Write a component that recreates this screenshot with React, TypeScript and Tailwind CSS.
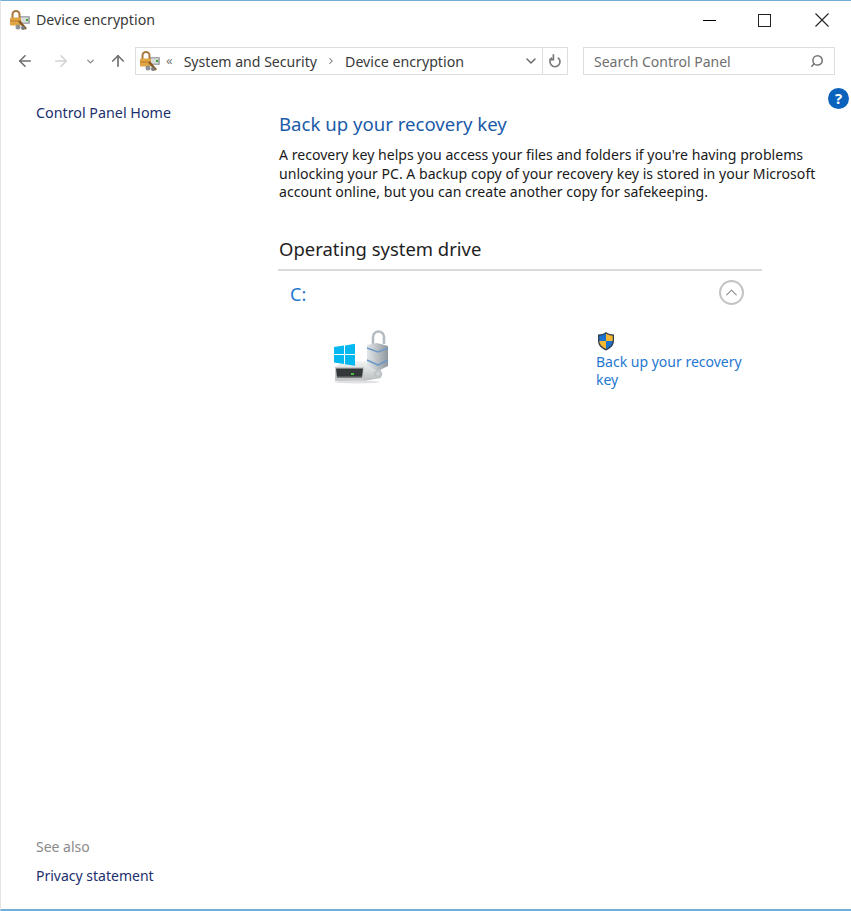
import { ArrowLeft, ArrowRight, ArrowUp, ChevronDown, ChevronRight, ChevronUp, Search } from "lucide-react";

const font = "font-['Noto_Sans','Open_Sans',sans-serif]";

function BitlockerIcon() {
  return (
    <svg width="22" height="22" viewBox="0 0 22 22" className="shrink-0">
      <rect x="10" y="7" width="11" height="8" rx="1" fill="#a9adb0" />
      <rect x="12" y="8.5" width="7" height="5" fill="#d8dcdc" />
      <rect x="17" y="10" width="2" height="2" fill="#38a82f" />
      <path d="M3.5 9V5.5a3.5 3.5 0 0 1 7 0V9" fill="none" stroke="#a9783f" strokeWidth="2" />
      <rect x="1" y="8.5" width="11" height="8" rx="1" fill="#e0a644" />
      <rect x="1" y="11.5" width="11" height="1" fill="#b9782a" />
      <path d="M10 12l7 8" stroke="#8a5a24" strokeWidth="2.5" />
      <circle cx="9" cy="18" r="2.5" fill="#8d9296" />
      <circle cx="14" cy="19" r="2" fill="#777c80" />
    </svg>
  );
}

function DriveLockIcon() {
  return (
    <svg width="60" height="54" viewBox="0 0 60 54">
      <defs>
        <linearGradient id="body" x1="0" y1="0" x2="0" y2="1">
          <stop offset="0" stopColor="#f4f5f5" />
          <stop offset="1" stopColor="#b9bdbf" />
        </linearGradient>
        <linearGradient id="lock" x1="0" y1="0" x2="1" y2="0">
          <stop offset="0" stopColor="#e3e7ea" />
          <stop offset="1" stopColor="#90989e" />
        </linearGradient>
      </defs>
      <path d="M4 37 L14 31 H42 L50 37 V48 L33 51 H4 Z" fill="url(#body)" />
      <path d="M4 37 H33 V51 H4 Z" fill="#c6c9ca" />
      <path d="M5 38.5 H32 L31 48 H6 Z" fill="#33373a" />
      <path d="M6 46.5 H31 V48 H6 Z" fill="#777b7d" />
      <rect x="20" y="43" width="3" height="2" fill="#46c23a" />
      <ellipse cx="26" cy="52" rx="23" ry="1.4" fill="#e0e1e2" />
      <path d="M3 17 L13 15.6 V24 H3 Z M14 15.4 L24 13.8 V24 H14 Z M3 25 H13 V34 L3 32.6 Z M14 25 H24 V35.8 L14 34.2 Z" fill="#05b8f0" />
      <path d="M42 14 V7 a5.5 5.5 0 0 1 11 0 V14" fill="none" stroke="#b5bcc1" strokeWidth="2.6" />
      <path d="M36 15 L46 13 L57 16 V36 L47 41 L36 36 Z" fill="url(#lock)" />
      <path d="M36 18 L47 22 L57 18 M36 30 L47 35 L57 30" fill="none" stroke="#6e9ac7" strokeWidth="1.6" />
      <circle cx="47" cy="44" r="3.2" fill="none" stroke="#bfc4c6" strokeWidth="2.2" />
    </svg>
  );
}

function ShieldIcon() {
  return (
    <svg width="20" height="20" viewBox="0 0 20 20">
      <path d="M10 1 C7.5 2.8 5 3.4 2 3.5 V10 C2 14.5 5.5 17.5 10 19.5 C14.5 17.5 18 14.5 18 10 V3.5 C15 3.4 12.5 2.8 10 1 Z" fill="#33414f" />
      <path d="M10 2.6 V10 H3.3 V4.8 C5.8 4.6 8 4 10 2.6 Z" fill="#1b72cf" />
      <path d="M10 2.6 C12 4 14.2 4.6 16.7 4.8 V10 H10 Z" fill="#f6b830" />
      <path d="M3.3 10 H10 V18 C6.5 16.4 3.6 13.8 3.3 10 Z" fill="#f6b830" />
      <path d="M10 10 H16.7 C16.4 13.8 13.5 16.4 10 18 Z" fill="#1b72cf" />
    </svg>
  );
}

function RefreshIcon() {
  return (
    <svg width="14" height="15" viewBox="0 0 14 15">
      <path d="M4.2 3.6 A5 5 0 1 0 9.8 3.6" fill="none" stroke="#7a7a7a" strokeWidth="1.7" />
      <path d="M4.8 0.6 V6 H0.6" transform="translate(0.6 -0.4)" fill="none" stroke="#7a7a7a" strokeWidth="1.7" />
    </svg>
  );
}

function TitleBar() {
  return (
    <div className="flex h-[38px] shrink-0 items-center pl-[8px]">
      <BitlockerIcon />
      <span className="ml-[5px] text-[14.2px] text-[#3a3a3a]">Device encryption</span>
      <div className="ml-auto flex items-center pr-[21px]">
        <div className="h-[1px] w-[13px] bg-black" />
        <div className="ml-[42px] h-[13px] w-[13px] border border-[#222]" />
        <svg width="16" height="16" viewBox="0 0 16 16" className="ml-[43px]">
          <path d="M1.5 1.5l13 13M14.5 1.5l-13 13" stroke="#222" strokeWidth="1.1" />
        </svg>
      </div>
    </div>
  );
}

function AddressRow() {
  return (
    <div className="mt-[8px] flex h-[28px] shrink-0 items-center pl-[15px]">
      <ArrowLeft size={18} strokeWidth={2.2} className="text-[#6f6f6f]" />
      <ArrowRight size={18} strokeWidth={2} className="ml-[18px] text-[#d2d2d2]" />
      <ChevronDown size={11} strokeWidth={3} className="ml-[15px] text-[#8a8a8a]" />
      <ArrowUp size={18} strokeWidth={2.2} className="ml-[13px] text-[#6f6f6f]" />
      <div className="ml-[8px] flex h-[28px] w-[433px] items-center border border-[#dedede] pl-[3px]">
        <BitlockerIcon />
        <span className="ml-[5px] text-[13px] text-[#7a7a7a]">«</span>
        <span className="ml-[11px] pt-[1px] text-[14.1px] text-[#3a3a3a]">System and Security</span>
        <ChevronRight size={10} strokeWidth={2.5} className="ml-[9px] text-[#707070]" />
        <span className="ml-[9px] pt-[1px] text-[14.2px] text-[#3a3a3a]">Device encryption</span>
        <div className="ml-auto flex h-full items-center">
          <ChevronDown size={16} strokeWidth={2.2} className="mr-[3px] text-[#6a6a6a]" />
          <div className="flex h-full w-[25px] items-center justify-center border-l border-[#dedede]">
            <RefreshIcon />
          </div>
        </div>
      </div>
      <div className="ml-[15px] flex h-[28px] w-[252px] items-center justify-between border border-[#dedede] pl-[10px] pr-[10px]">
        <span className="text-[14px] text-[#6f6f6f]">Search Control Panel</span>
        <Search size={14} strokeWidth={2.6} className="-scale-x-100 text-[#777]" />
      </div>
    </div>
  );
}

function Sidebar() {
  return (
    <aside className="flex w-[277px] shrink-0 flex-col justify-between pb-[23px] pl-[35px] pt-[27px] text-[14px]">
      <a className="text-[14.3px] text-[#1c2f6e]">Control Panel Home</a>
      <div className="flex flex-col gap-[8px]">
        <span className="text-[#8b8b8b]">See also</span>
        <a className="text-[#1c2f6e]">Privacy statement</a>
      </div>
    </aside>
  );
}

function Content() {
  return (
    <main className="flex-1 pl-[1px] pt-[36px]">
      <h1 className="text-[18.6px] leading-[26px] text-[#1a5ba8]">Back up your recovery key</h1>
      <p className="mt-[9px] w-[550px] text-[14.1px] leading-[18.5px] text-[#1a1a1a]">
        A recovery key helps you access your files and folders if you're having problems unlocking your PC. A backup copy of your recovery key is stored in your Microsoft account online, but you can create another copy for safekeeping.
      </p>
      <div className="-ml-[1px] mt-[33px] w-[484px]">
        <h2 className="border-b-2 border-[#d9d9d9] pb-[7px] pl-[1px] text-[18.45px] leading-[27px] text-[#1e1e1e]">Operating system drive</h2>
        <div className="flex items-center justify-between pl-[12px] pr-[18px] pt-[10px]">
          <span className="text-[18px] leading-[26px] text-[#1f78d1]">C:</span>
          <div className="-mt-[2px] flex h-[25px] w-[25px] items-center justify-center rounded-full border-2 border-[#c4c4c4]">
            <ChevronUp size={19} strokeWidth={1.5} className="text-[#8f8f8f]" />
          </div>
        </div>
        <div className="mt-[23px] flex items-start">
          <div className="ml-[53px] w-[265px]">
            <DriveLockIcon />
          </div>
          <div className="mt-[1px] w-[150px]">
            <ShieldIcon />
            <a className="mt-[2px] block text-[14px] leading-[18px] text-[#1f78d1]">Back up your recovery key</a>
          </div>
        </div>
      </div>
    </main>
  );
}

export default function App() {
  return (
    <div className={`${font} relative flex h-[911px] w-[851px] flex-col border-b-2 border-l border-t border-[#74add6] border-l-[#e4e4e4] bg-white`}>
      <TitleBar />
      <AddressRow />
      <div className="flex min-h-0 flex-1">
        <Sidebar />
        <Content />
      </div>
      <div className="absolute right-[2px] top-[87px] flex h-[21px] w-[21px] items-center justify-center rounded-full bg-[#0a62bd] text-[15px] font-bold text-white">?</div>
    </div>
  );
}
